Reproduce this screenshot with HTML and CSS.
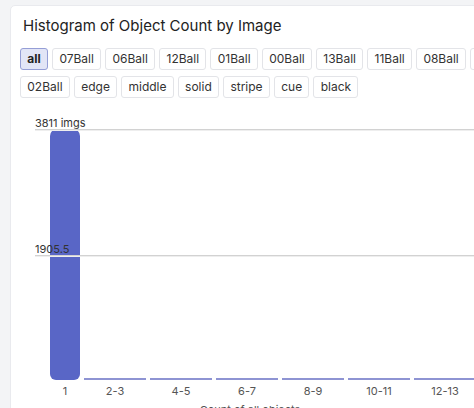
FILE: index.html
```html
<!DOCTYPE html>
<html>
<head>
<meta charset="utf-8">
<link rel="stylesheet" href="styles.css">
</head>
<body>
<div class="card">
  <h1 class="title">Histogram of Object Count by Image</h1>
  <div class="filters">
    <button class="chip active">all</button>
    <button class="chip">07Ball</button>
    <button class="chip">06Ball</button>
    <button class="chip">12Ball</button>
    <button class="chip">01Ball</button>
    <button class="chip">00Ball</button>
    <button class="chip">13Ball</button>
    <button class="chip">11Ball</button>
    <button class="chip">08Ball</button>
    <button class="chip">09Ball</button>
    <button class="chip">02Ball</button>
    <button class="chip">edge</button>
    <button class="chip">middle</button>
    <button class="chip">solid</button>
    <button class="chip">stripe</button>
    <button class="chip">cue</button>
    <button class="chip">black</button>
  </div>
  <div class="chart">
    <div class="plot">
      <div class="bars">
        <div class="bar big" style="height: 251px"></div>
        <div class="bar"></div>
        <div class="bar"></div>
        <div class="bar"></div>
        <div class="bar"></div>
        <div class="bar"></div>
        <div class="bar"></div>
      </div>
      <div class="gridline top"><span>3811 imgs</span></div>
      <div class="gridline mid"><span>1905.5</span></div>
    </div>
    <div class="xlabels">
      <span class="xl first">1</span>
      <span class="xl">2-3</span>
      <span class="xl">4-5</span>
      <span class="xl">6-7</span>
      <span class="xl">8-9</span>
      <span class="xl">10-11</span>
      <span class="xl">12-13</span>
    </div>
    <div class="xtitle">Count of all objects</div>
  </div>
</div>
</body>
</html>
```

FILE: styles.css
```css
html, body {
  margin: 0;
  padding: 0;
}
body {
  background: #f3f4f6;
  overflow: hidden;
  font-family: Inter, "Noto Sans", sans-serif;
  width: 474px;
  height: 408px;
}
.card {
  margin: 5px 0 0 10px;
  width: 560px;
  height: 460px;
  background: #ffffff;
  border: 1px solid #e9eaee;
  border-radius: 5px;
  box-sizing: border-box;
  padding: 9px 9px 0 9px;
}
.title {
  margin: 0 0 0 3px;
  font-size: 15px;
  font-weight: 400;
  color: #222;
  line-height: 22px;
}
.filters {
  display: flex;
  flex-wrap: wrap;
  gap: 6px 4px;
  margin-top: 11px;
  width: 520px;
}
.chip {
  font-family: Inter, "Noto Sans", sans-serif;
  font-size: 12px;
  color: #333;
  background: #fff;
  border: 1px solid #e3e4e8;
  border-radius: 3px;
  height: 22px;
  padding: 0 6.3px;
  line-height: 20px;
  margin: 0;
}
.chip.active {
  background: #e2e5f6;
  border-color: #959ed6;
  font-weight: 700;
  color: #222;
}
.chart {
  margin-top: 31px;
  margin-left: 15px;
}
.plot {
  position: relative;
  height: 252px;
}
.bars {
  display: flex;
  align-items: flex-end;
  gap: 4px;
  height: 100%;
  padding-left: 15px;
}
.bar {
  width: 62px;
  height: 2px;
  background: #8e94d3;
  margin-bottom: 1px;
}
.bar.big {
  width: 30px;
  background: #5966c6;
  border-radius: 7px 7px 6px 6px;
}
.gridline {
  position: absolute;
  left: 0;
  right: 0;
  height: 1px;
  background: #d2d2d2;
  box-shadow: 0 1px 0 #eeeeee;
}
.gridline.top { top: 0; }
.gridline.mid { top: 126px; }
.gridline span {
  position: absolute;
  left: 0;
  bottom: 0;
  font-size: 11px;
  line-height: 13px;
  color: #333;
}
.xlabels {
  display: flex;
  gap: 4px;
  padding-left: 15px;
  margin-top: 3px;
}
.xl {
  width: 62px;
  text-align: center;
  font-size: 11px;
  line-height: 14px;
  color: #555;
}
.xl.first { width: 30px; }
.xtitle {
  width: 430px;
  text-align: center;
  font-size: 11px;
  color: #555;
  margin-top: 5px;
  line-height: 14px;
}
```
